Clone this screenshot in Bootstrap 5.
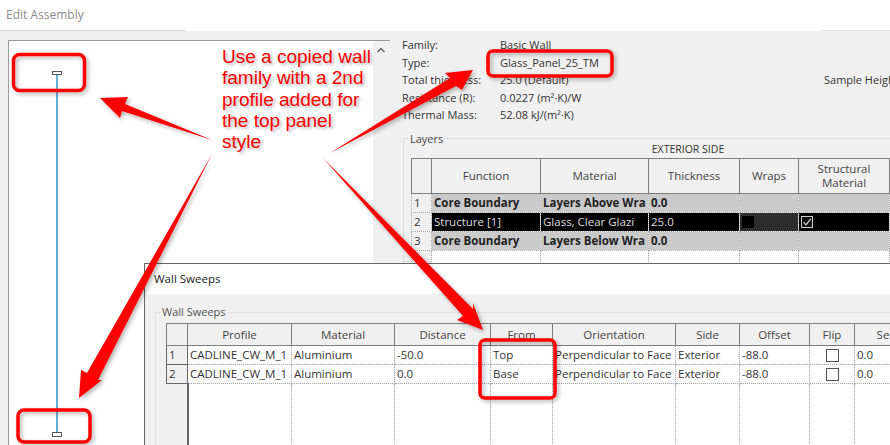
<!DOCTYPE html>
<html lang="en">
<head>
    <meta charset="UTF-8">
    <meta name="viewport" content="width=device-width, initial-scale=1.0">
    <title>Edit Assembly</title>
    <link href="https://cdn.jsdelivr.net/npm/bootstrap@5.3.0/dist/css/bootstrap.min.css" rel="stylesheet">
    <style>
        html, body { width: 890px; height: 445px; overflow: hidden; }
        body { background-color: #f0f0f0; font-family: "Open Sans", "Liberation Sans", sans-serif; font-size: 11px; color: #333; position: relative; }
        .title-bar { height: 31px; padding: 6px 6px 0; font-size: 12px; color: #8c8c8c; background: linear-gradient(#d6d6d6, #d6d6d6) 0 100% / 185px 1px no-repeat, linear-gradient(#e2e2e2, #e2e2e2) 100% 100% / 70px 1px no-repeat, #fff; }
        .main { height: 414px; }
        .preview { width: 382px; margin: 9px 0 0 8px; border-top: 1px solid #999; border-left: 1px solid #999; background: #fff; position: relative; flex: none; }
        .preview-scroll { width: 17px; margin-left: auto; height: 100%; background: #f0f0f0; padding: 5px 0 0 3px; }
        .preview-scroll svg { display: block; }
        .wall { position: absolute; left: 40px; top: 28px; }
        .props { width: 488px; margin-left: 12px; padding-top: 5px; flex: none; }
        .prop-row { height: 17.6px; line-height: 17.6px; white-space: nowrap; }
        .prop-label { width: 98px; }
        .sample { width: 66px; }
        .layers { border: 1px solid #dcdcdc; border-right: 0; margin: 8px 0 0 1px; padding: 0 0 0 7px; height: 130px; }
        .layers legend, .sweeps legend { float: none; width: auto; font-size: 11px; line-height: 14px; margin: 0 0 0 -3px; padding: 0 2px; color: #444; }
        .ext-side { width: 478px; text-align: center; line-height: 14px; margin-top: -4px; margin-bottom: 2px; font-size: 10.5px; padding-left: 76px; }
        .rvt-grid.table { table-layout: fixed; margin: 0; border-collapse: collapse; width: auto; color: #333; }
        .rvt-grid.table th, .rvt-grid.table td { padding: 0 2px; font-weight: 400; font-size: 11.5px; white-space: nowrap; overflow: hidden; vertical-align: middle; line-height: 14px; }
        .rvt-grid.table th { background: #f0f0f0; border: 1px solid #7d7d7d; text-align: center; color: #444; }
        .rvt-grid.table td { background: #fff; border: 1px dotted #a8a8a8; height: 19px; }
        .rvt-grid.table td.num { background: #f0f0f0; }
        .rvt-grid.table td.core { background: #cacaca; font-weight: 700; color: #222; }
        .rvt-grid.table td.picked { background: #000; color: #ddd; }
        .rvt-grid.table td.picked.dim { background: #2e2e2e; }
        .layers-grid { width: 520px !important; }
        .layers-grid th { height: 35px; }
        .layers-grid col:nth-child(1) { width: 20px; }
        .layers-grid col:nth-child(2) { width: 109px; }
        .layers-grid col:nth-child(3) { width: 108px; }
        .layers-grid col:nth-child(4) { width: 91px; }
        .layers-grid col:nth-child(5) { width: 59px; }
        .layers-grid col:nth-child(6) { width: 91px; }
        .layers-grid col:nth-child(7) { width: 42px; }
        .tick { width: 12px; height: 12px; display: block; }
        .sweeps-window { position: absolute; left: 144px; top: 263px; width: 760px; height: 190px; background: #f0f0f0; border: 1px solid #666; overflow: hidden; }
        .sweeps-title { height: 30px; background: #fff; padding: 7px 0 0 9px; font-size: 11.5px; color: #222; line-height: 16px; }
        .sweeps { border: 1px solid #e0e0e0; margin: 11px 0 0 10px; padding: 0 0 0 10px; height: 160px; }
        .sweeps legend { margin-left: -6px; color: #555; }
        .sweeps-grid { width: 745px !important; margin-top: 4px !important; }
        .sweeps-grid th { height: 22px; }
        .sweeps-grid td.num { border: 1px solid #666 !important; border-top: 0 !important; }
        .sweeps-grid td.tall { height: 70px; }
        .sweeps-grid td.rest { background: #f0f0f0; border: 0 !important; border-right: 2px solid #666 !important; }
        .sweeps-grid col:nth-child(1) { width: 21px; }
        .sweeps-grid col:nth-child(2) { width: 104px; }
        .sweeps-grid col:nth-child(3) { width: 103px; }
        .sweeps-grid col:nth-child(4) { width: 96px; }
        .sweeps-grid col:nth-child(5) { width: 62px; }
        .sweeps-grid col:nth-child(6) { width: 123px; }
        .sweeps-grid col:nth-child(7) { width: 64px; }
        .sweeps-grid col:nth-child(8) { width: 70px; }
        .sweeps-grid col:nth-child(9) { width: 45px; }
        .sweeps-grid col:nth-child(10) { width: 57px; }
        .flip { width: 13px; height: 13px; border: 1px solid #555; background: #fff; display: block; margin: 0 auto; }
        .markup { position: absolute; left: 0; top: 0; pointer-events: none; }
        .note { position: absolute; left: 222px; top: 46px; width: 152px; color: #f00; font-family: "Liberation Sans", Arial, sans-serif; font-size: 19px; line-height: 21.3px; text-shadow: 2px 2px 3px rgba(0,0,0,.3); }
    </style>
</head>
<body>
    <div class="title-bar">Edit Assembly</div>

    <div class="main d-flex">
        <!-- preview pane -->
        <div class="preview d-flex">
            <svg class="wall" width="20" height="380" viewBox="0 0 20 380">
                <rect x="7" y="4" width="2" height="363" fill="#62aedb"/>
                <rect x="3.5" y="2.5" width="9" height="3" fill="#fff" stroke="#555"/>
                <rect x="3.5" y="363.5" width="9" height="4" fill="#fff" stroke="#555"/>
            </svg>
            <div class="preview-scroll">
                <svg width="10" height="8" viewBox="0 0 10 8"><path d="M1.5 6 L5 2.5 L8.5 6" fill="none" stroke="#606060" stroke-width="1.4"/></svg>
            </div>
        </div>

        <!-- assembly properties -->
        <div class="props">
            <div class="prop-row d-flex"><span class="prop-label">Family:</span><span>Basic Wall</span></div>
            <div class="prop-row d-flex"><span class="prop-label">Type:</span><span>Glass_Panel_25_TM</span></div>
            <div class="prop-row d-flex"><span class="prop-label">Total thickness:</span><span>25.0 (Default)</span><span class="sample ms-auto">Sample Height:</span></div>
            <div class="prop-row d-flex"><span class="prop-label">Resistance (R):</span><span>0.0227 (m²·K)/W</span></div>
            <div class="prop-row d-flex"><span class="prop-label">Thermal Mass:</span><span>52.08 kJ/(m²·K)</span></div>

            <fieldset class="layers">
                <legend>Layers</legend>
                <div class="ext-side">EXTERIOR SIDE</div>
                <table class="table rvt-grid layers-grid">
                    <colgroup><col><col><col><col><col><col><col></colgroup>
                    <thead>
                        <tr><th></th><th>Function</th><th>Material</th><th>Thickness</th><th>Wraps</th><th>Structural<br>Material</th><th></th></tr>
                    </thead>
                    <tbody>
                        <tr><td class="num">1</td><td class="core">Core Boundary</td><td class="core">Layers Above Wra</td><td class="core">0.0</td><td class="core"></td><td class="core"></td><td class="core"></td></tr>
                        <tr>
                            <td class="num">2</td><td class="picked">Structure [1]</td><td class="picked">Glass, Clear Glazi</td><td class="picked">25.0</td>
                            <td class="picked dim"><svg class="tick" viewBox="0 0 12 12"><rect width="12" height="12" fill="#000"/></svg></td>
                            <td class="picked"><svg class="tick" viewBox="0 0 12 12"><rect x=".5" y=".5" width="11" height="11" fill="#111" stroke="#ccc"/><path d="M2.5 6 L5 8.8 L9.8 2.8" fill="none" stroke="#ddd" stroke-width="1.1"/></svg></td>
                            <td class="picked"></td>
                        </tr>
                        <tr><td class="num">3</td><td class="core">Core Boundary</td><td class="core">Layers Below Wra</td><td class="core">0.0</td><td class="core"></td><td class="core"></td><td class="core"></td></tr>
                        <tr><td class="num"></td><td></td><td></td><td></td><td></td><td></td><td></td></tr>
                    </tbody>
                </table>
            </fieldset>
        </div>
    </div>

    <!-- wall sweeps dialog on top -->
    <div class="sweeps-window">
        <div class="sweeps-title">Wall Sweeps</div>
        <fieldset class="sweeps">
            <legend>Wall Sweeps</legend>
            <table class="table rvt-grid sweeps-grid">
                <colgroup><col><col><col><col><col><col><col><col><col><col></colgroup>
                <thead>
                    <tr><th></th><th>Profile</th><th>Material</th><th>Distance</th><th>From</th><th>Orientation</th><th>Side</th><th>Offset</th><th>Flip</th><th>Se</th></tr>
                </thead>
                <tbody>
                    <tr><td class="num">1</td><td>CADLINE_CW_M_1</td><td>Aluminium</td><td>-50.0</td><td>Top</td><td>Perpendicular to Face</td><td>Exterior</td><td>-88.0</td><td><span class="flip"></span></td><td>0.0</td></tr>
                    <tr><td class="num">2</td><td>CADLINE_CW_M_1</td><td>Aluminium</td><td>0.0</td><td>Base</td><td>Perpendicular to Face</td><td>Exterior</td><td>-88.0</td><td><span class="flip"></span></td><td>0.0</td></tr>
                    <tr><td class="rest tall"></td><td class="tall"></td><td class="tall"></td><td class="tall"></td><td class="tall"></td><td class="tall"></td><td class="tall"></td><td class="tall"></td><td class="tall"></td><td class="tall"></td></tr>
                </tbody>
            </table>
        </fieldset>
    </div>

    <!-- red annotations drawn over the screenshot -->
    <svg class="markup" width="890" height="445" viewBox="0 0 890 445">
        <defs>
            <filter id="soft" x="-20%" y="-20%" width="140%" height="140%">
                <feDropShadow dx="2" dy="2" stdDeviation="2.2" flood-color="#000" flood-opacity=".3"/>
            </filter>
        </defs>
        <g filter="url(#soft)" fill="#f00">
            <polygon points="100,98 128,97 125,104 212,140 122,111 120,118"/>
            <polygon points="79,398 81,370 87,373 212,154 98,380 102,380"/>
            <polygon points="473,70 445,73 450,78 330,153 456,86 462,90"/>
            <polygon points="483,330 457,320 463,316 323,158 473,309 473,303"/>
        </g>
        <g filter="url(#soft)" fill="none" stroke="#f00" stroke-width="3.5">
            <rect x="13.5" y="54.5" width="71" height="36" rx="6"/>
            <rect x="488" y="51" width="124" height="25" rx="5"/>
            <rect x="18" y="410" width="72" height="32" rx="6"/>
            <rect x="480" y="340" width="75" height="58" rx="5"/>
        </g>
    </svg>
    <div class="note">Use a copied wall family with a 2nd profile added for the top panel style</div>

    <script src="https://cdn.jsdelivr.net/npm/bootstrap@5.3.0/dist/js/bootstrap.bundle.min.js"></script>
</body>
</html>
